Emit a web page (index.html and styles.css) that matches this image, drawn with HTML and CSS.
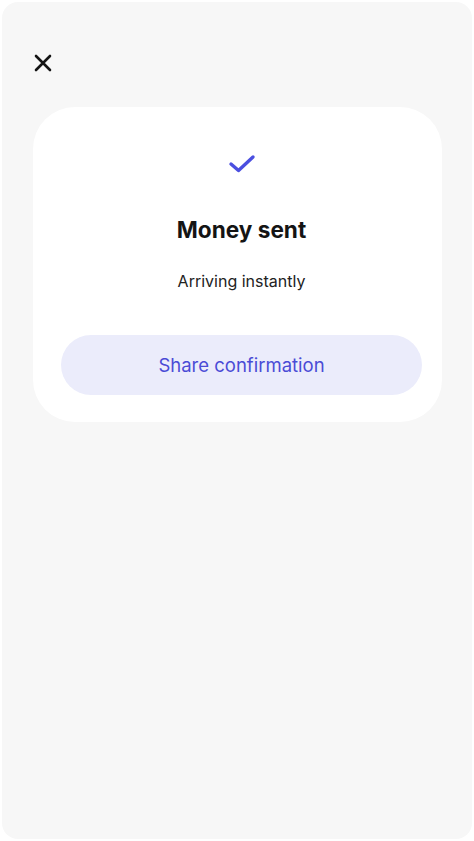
FILE: index.html
```html
<!DOCTYPE html>
<html lang="en">
<head>
    <meta charset="UTF-8">
    <meta name="viewport" content="width=device-width, initial-scale=1.0">
    <title>Money sent</title>
    <link rel="stylesheet" href="styles.css">
</head>
<body>
    <div class="screen">
        <!-- tombol tutup -->
        <button class="close-btn" aria-label="Close">
            <svg width="18" height="18" viewBox="0 0 18 18" fill="none">
                <path d="M2 2L16 16M16 2L2 16" stroke="#141414" stroke-width="2.6" stroke-linecap="round"/>
            </svg>
        </button>

        <div class="card">
            <div class="check">
                <svg width="28" height="20" viewBox="0 0 28 20" fill="none">
                    <path d="M3 10L10.5 16.5L25 3" stroke="#4b4fe0" stroke-width="3.4" stroke-linecap="round" stroke-linejoin="round"/>
                </svg>
            </div>
            <h2 class="title">Money sent</h2>
            <p class="subtitle">Arriving instantly</p>
            <button class="share-btn">Share confirmation</button>
        </div>
    </div>
</body>
</html>
```

FILE: styles.css
```css
body {
    font-family: Inter, "Noto Sans", sans-serif;
    background-color: #ffffff;
    margin: 0;
    padding: 2px;
    box-sizing: border-box;
}
.screen {
    height: 837px;
    background-color: #f7f7f7;
    border-radius: 16px;
    padding: 52px 30px 0 31px;
    box-sizing: border-box;
}
.close-btn {
    display: flex;
    width: 18px;
    height: 18px;
    padding: 0;
    margin: 0 0 35px 1px;
    border: none;
    background: none;
    cursor: pointer;
}
.card {
    background-color: #ffffff;
    border-radius: 42px;
    padding: 45px 20px 27px 28px;
    display: flex;
    flex-direction: column;
    align-items: center;
}
.check {
    height: 24px;
    display: flex;
    align-items: center;
}
.title {
    margin: 39px 0 0;
    font-size: 22.6px;
    font-weight: 700;
    color: #141414;
    line-height: 30px;
}
.subtitle {
    margin: 25px 0 0;
    font-size: 16px;
    color: #222222;
    line-height: 22px;
}
.share-btn {
    margin-top: 43px;
    width: 100%;
    height: 60px;
    border: none;
    border-radius: 30px;
    background-color: #ebecfb;
    color: #4a4bd6;
    font-family: inherit;
    font-size: 18.5px;
    cursor: pointer;
}
```
